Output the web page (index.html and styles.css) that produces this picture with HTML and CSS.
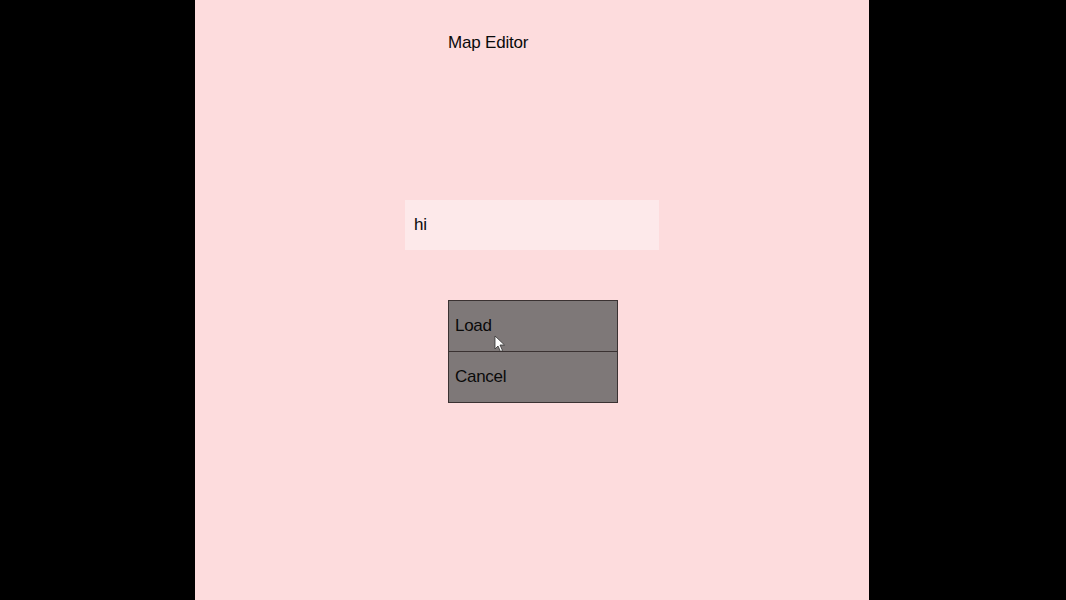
FILE: index.html
```html
<!DOCTYPE html>
<html>
<head>
<meta charset="utf-8">
<link rel="stylesheet" href="styles.css">
</head>
<body>
<div class="panel">
  <h1 class="title">Map Editor</h1>
  <div class="field"><span class="field-text">hi</span></div>
  <div class="menu">
    <div class="item">Load
      <svg class="cursor" width="12" height="18" viewBox="0 0 12 18"><path d="M1 1 L1 14 L4 11 L6.5 16.5 L8.5 15.5 L6 10 L10.5 10 Z" fill="#fff" stroke="#333" stroke-width="0.8"/></svg>
    </div>
    <div class="item">Cancel</div>
  </div>
</div>
</body>
</html>
```

FILE: styles.css
```css
html, body {
  margin: 0;
  padding: 0;
  height: 100%;
  background: #000;
}
body {
  display: flex;
  justify-content: center;
  font-family: "Liberation Sans", Arial, sans-serif;
  overflow: hidden;
}
.panel {
  width: 674px;
  height: 600px;
  margin-left: -2px;
  background: #fddcdd;
  display: flex;
  flex-direction: column;
  align-items: center;
}
.title {
  margin: 33px 0 0 0;
  align-self: flex-start;
  padding-left: 253px;
  font-size: 17px;
  font-weight: normal;
  color: #0a0a0a;
  line-height: 20px;
  letter-spacing: -0.2px;
}
.field {
  margin-top: 147px;
  width: 254px;
  height: 50px;
  background: #fde9ea;
  display: flex;
  align-items: center;
  box-sizing: border-box;
  padding-left: 9px;
}
.field-text {
  font-size: 17px;
  color: #0a0a0a;
  letter-spacing: -0.3px;
}
.menu {
  margin-top: 50px;
  margin-left: 2px;
  width: 170px;
  box-sizing: border-box;
  border: 1px solid #3a3232;
  background: #7e7878;
  display: flex;
  flex-direction: column;
}
.item {
  position: relative;
  height: 50px;
  display: flex;
  align-items: center;
  padding-left: 6px;
  font-size: 17px;
  color: #0a0a0a;
  letter-spacing: -0.3px;
}
.item + .item {
  border-top: 1px solid #3a3232;
}
.cursor {
  position: absolute;
  left: 45px;
  top: 34px;
}
```
